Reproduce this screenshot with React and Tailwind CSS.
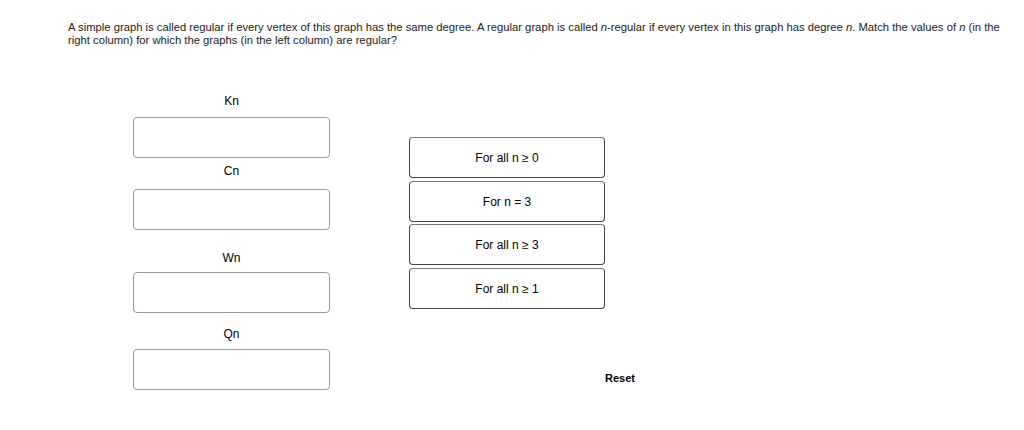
export default function App() {
  const left = [
    { label: "Kn", labelMt: "mt-[48px]", boxMt: "mt-[9px]" },
    { label: "Cn", labelMt: "mt-[7px]", boxMt: "mt-[11px]" },
    { label: "Wn", labelMt: "mt-[22px]", boxMt: "mt-[7px]" },
    { label: "Qn", labelMt: "mt-[15px]", boxMt: "mt-[8px]" },
  ];
  const right = [
    { text: "For all n ≥ 0", mt: "mt-[90px]" },
    { text: "For n = 3", mt: "mt-[3px]" },
    { text: "For all n ≥ 3", mt: "mt-[2px]" },
    { text: "For all n ≥ 1", mt: "mt-[3px]" },
  ];

  return (
    <div className="w-[1024px] h-[430px] bg-white text-[#222] font-['Liberation_Sans',Arial,sans-serif] overflow-hidden">
      <p className="ml-[68px] pt-[21px] w-[936px] text-[11.25px] leading-[13px]">
        A simple graph is called regular if every vertex of this graph has the same degree. A regular graph is called <i>n</i>-regular if every vertex in this graph has degree <i>n</i>. Match the values of <i>n</i> (in the right column) for which the graphs (in the left column) are regular?
      </p>

      <div className="flex">
        <div className="ml-[133px] w-[197px] flex flex-col">
          {left.map((item) => (
            <div key={item.label} className="flex flex-col">
              <div className={`${item.labelMt} text-center text-black text-[12px] leading-[13px]`}>{item.label}</div>
              <div className={`${item.boxMt} h-[41px] rounded-[4px] border border-[#999] bg-white`} />
            </div>
          ))}
        </div>

        <div className="ml-[79px] w-[196px] flex flex-col">
          {right.map((item) => (
            <div
              key={item.text}
              className={`${item.mt} h-[41px] rounded-[4px] border border-[#444] border-t-[#777] bg-white flex items-center justify-center text-black text-[12px]`}
            >
              {item.text}
            </div>
          ))}
          <div className="mt-[63px] self-end -mr-[30px] font-bold text-black text-[11px] leading-[13px]">Reset</div>
        </div>
      </div>
    </div>
  );
}
